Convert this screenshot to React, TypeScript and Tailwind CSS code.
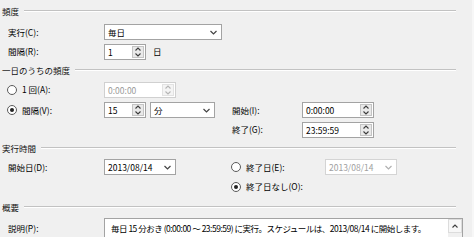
import React from 'react';

function Chevron({ up = false, disabled = false }: { up?: boolean; disabled?: boolean }) {
  return (
    <svg width="6" height="4" viewBox="0 0 6 4" className="block">
      <path
        d={up ? 'M0.5 3.5 L3 1 L5.5 3.5' : 'M0.5 0.5 L3 3 L5.5 0.5'}
        fill="none"
        stroke={disabled ? '#b5b5b5' : '#3c3c3c'}
        strokeWidth="1.1"
      />
    </svg>
  );
}

function Section({ title, className = '' }: { title: string; className?: string }) {
  return (
    <div className={`flex items-center pr-[18px] ${className}`}>
      <span className="shrink-0 pl-[2px] pr-[5px] text-[#111]">{title}</span>
      <div className="h-0 flex-1 border-t border-b border-t-[#c2c2c2] border-b-white" />
    </div>
  );
}

function Spin({ value, width, disabled = false }: { value: string; width: string; disabled?: boolean }) {
  return (
    <div
      className={`flex h-[16px] bg-white ${width} border ${disabled ? 'border-[#d0d0d0] text-[#9a9a9a]' : 'border-[#a3a3a3] text-black'}`}
    >
      <div className="flex-1 pl-[3px] leading-[14px]">{value}</div>
      <div
        className={`my-[1px] mr-[1px] flex w-[12px] flex-col items-center justify-center gap-[2px] border ${disabled ? 'border-[#e2e2e2] bg-[#f4f4f4]' : 'border-[#c4c4c4] bg-[#e9e9e9]'}`}
      >
        <Chevron up disabled={disabled} />
        <Chevron disabled={disabled} />
      </div>
    </div>
  );
}

function Combo({ value, width, disabled = false }: { value: string; width: string; disabled?: boolean }) {
  return (
    <div
      className={`flex h-[16px] items-center bg-white ${width} border ${disabled ? 'border-[#d4d4d4] text-[#a0a0a0]' : 'border-[#a3a3a3] text-black'}`}
    >
      <div className="flex-1 pl-[3px] leading-[14px]">{value}</div>
      <div className="pr-[4px]">
        <svg width="7" height="5" viewBox="0 0 7 5" className="block">
          <path d="M0.5 1 L3.5 4 L6.5 1" fill="none" stroke={disabled ? '#b0b0b0' : '#444'} strokeWidth="1.2" />
        </svg>
      </div>
    </div>
  );
}

function Radio({ checked, label, width }: { checked: boolean; label: string; width: string }) {
  return (
    <div className={`flex shrink-0 items-center gap-[5px] ${width}`}>
      <div className="flex h-[10px] w-[10px] items-center justify-center rounded-full border border-[#5a5a5a] bg-white">
        {checked && <div className="h-[4px] w-[4px] rounded-full bg-[#222]" />}
      </div>
      <span>{label}</span>
    </div>
  );
}

export default function App() {
  return (
    <div className="relative h-[237px] w-[474px] overflow-hidden bg-[#f0f0f0] font-['Noto_Sans_CJK_JP',sans-serif] text-[8.5px] leading-none text-black">
      <Section title="頻度" className="h-[22px]" />
      <div className="flex h-[20px] items-center">
        <div className="w-[104px] shrink-0 pl-[8px]">実行(C):</div>
        <Combo value="毎日" width="w-[118px]" />
      </div>
      <div className="flex h-[19px] items-center">
        <div className="w-[104px] shrink-0 pl-[8px]">間隔(R):</div>
        <Spin value="1" width="w-[42px]" />
        <span className="pl-[7px]">日</span>
      </div>

      <Section title="一日のうちの頻度" className="h-[18px]" />
      <div className="flex h-[21px] items-center">
        <div className="w-[104px] shrink-0 pl-[7px]">
          <Radio checked={false} label="1 回(A):" width="w-[97px]" />
        </div>
        <Spin value="0:00:00" width="w-[72px]" disabled />
      </div>
      <div className="flex h-[20px] items-center">
        <div className="w-[104px] shrink-0 pl-[7px]">
          <Radio checked label="間隔(V):" width="w-[97px]" />
        </div>
        <Spin value="15" width="w-[42px]" />
        <div className="pl-[4px]">
          <Combo value="分" width="w-[65px]" />
        </div>
        <div className="w-[87px] shrink-0 pl-[17px]">開始(I):</div>
        <Spin value="0:00:00" width="w-[72px]" />
      </div>
      <div className="flex h-[19px] items-center">
        <div className="w-[302px] shrink-0 pl-[232px]">終了(G):</div>
        <Spin value="23:59:59" width="w-[72px]" />
      </div>

      <Section title="実行時間" className="h-[18px]" />
      <div className="flex h-[20px] items-center">
        <div className="w-[104px] shrink-0 pl-[8px]">開始日(D):</div>
        <Combo value="2013/08/14" width="w-[72px]" />
        <div className="w-[149px] shrink-0 pl-[55px]">
          <Radio checked={false} label="終了日(E):" width="w-[94px]" />
        </div>
        <Combo value="2013/08/14" width="w-[72px]" disabled />
      </div>
      <div className="flex h-[19px] items-center">
        <div className="shrink-0 pl-[231px]">
          <Radio checked label="終了日なし(O):" width="w-[120px]" />
        </div>
      </div>

      <Section title="概要" className="h-[22px]" />
      <div className="flex">
        <div className="w-[104px] shrink-0 pl-[8px] pt-[6px]">説明(P):</div>
        <div className="flex h-[40px] w-[359px] border border-[#a3a3a3] bg-white">
          <div className="flex-1 whitespace-nowrap pl-[6px] pt-[5px] tracking-[-0.5px]">
            毎日 15 分おき (0:00:00 ～ 23:59:59) に実行。スケジュールは、2013/08/14 に開始します。
          </div>
          <div className="flex w-[14px] flex-col bg-[#f0f0f0]">
            <div className="flex h-[14px] items-center justify-center border border-[#dcdcdc] bg-[#f7f7f7]">
              <Chevron up />
            </div>
          </div>
        </div>
      </div>
      <div className="absolute right-0 top-0 h-full w-[2px] bg-[#f7f7f7]" />
    </div>
  );
}
